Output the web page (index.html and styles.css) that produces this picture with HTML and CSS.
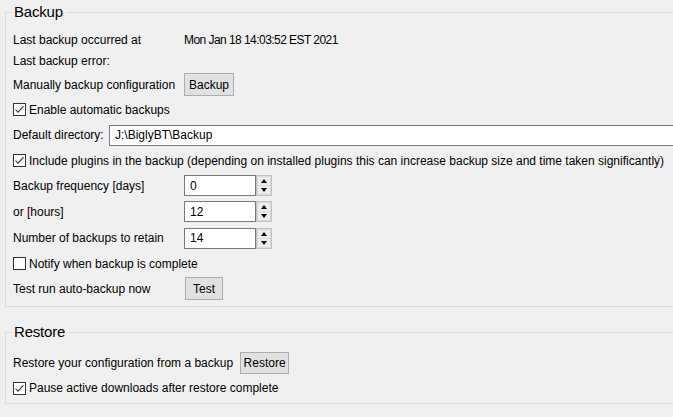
FILE: index.html
```html
<!DOCTYPE html>
<html>
<head>
<meta charset="utf-8">
<link rel="stylesheet" href="styles.css">
</head>
<body>
<div class="page">
  <fieldset class="group group-backup">
    <legend class="group-title">Backup</legend>
    <div class="row h20"><span class="lbl">Last backup occurred at</span><span class="date">Mon Jan 18 14:03:52 EST 2021</span></div>
    <div class="row h22"><span class="lbl">Last backup error:</span></div>
    <div class="row h25"><span class="lbl">Manually backup configuration</span><span class="btn btn-backup">Backup</span></div>
    <div class="row h25"><span class="cb checked"><svg viewBox="0 0 11 11" width="11" height="11"><polyline points="1.5,5.5 4,8.2 9.5,2.2" fill="none" stroke="#333" stroke-width="1.1"/></svg></span><span>Enable automatic backups</span></div>
    <div class="row h26"><span class="lbl-dir">Default directory:</span><span class="field dir-field">J:\BiglyBT\Backup</span></div>
    <div class="row h25"><span class="cb checked"><svg viewBox="0 0 11 11" width="11" height="11"><polyline points="1.5,5.5 4,8.2 9.5,2.2" fill="none" stroke="#333" stroke-width="1.1"/></svg></span><span>Include plugins in the backup (depending on installed plugins this can increase backup size and time taken significantly)</span></div>
    <div class="row h25"><span class="lbl">Backup frequency [days]</span>
      <div class="spin"><span class="field spin-field">0</span><span class="spin-btns"><span class="sb"><i class="up"></i></span><span class="sb"><i class="down"></i></span></span></div></div>
    <div class="row h27"><span class="lbl">or [hours]</span>
      <div class="spin"><span class="field spin-field">12</span><span class="spin-btns"><span class="sb"><i class="up"></i></span><span class="sb"><i class="down"></i></span></span></div></div>
    <div class="row h26"><span class="lbl">Number of backups to retain</span>
      <div class="spin"><span class="field spin-field">14</span><span class="spin-btns"><span class="sb"><i class="up"></i></span><span class="sb"><i class="down"></i></span></span></div></div>
    <div class="row h25"><span class="cb"></span><span>Notify when backup is complete</span></div>
    <div class="row h25"><span class="lbl">Test run auto-backup now</span><span class="btn btn-test">Test</span></div>
  </fieldset>
  <fieldset class="group group-restore">
    <legend class="group-title">Restore</legend>
    <div class="row h26 gap7"><span>Restore your configuration from a backup</span><span class="btn btn-restore">Restore</span></div>
    <div class="row h24"><span class="cb checked"><svg viewBox="0 0 11 11" width="11" height="11"><polyline points="1.5,5.5 4,8.2 9.5,2.2" fill="none" stroke="#333" stroke-width="1.1"/></svg></span><span>Pause active downloads after restore complete</span></div>
  </fieldset>
</div>
</body>
</html>
```
FILE: styles.css
```css
html, body {
  margin: 0;
  padding: 0;
  background: #f0f0f0;
  overflow: hidden;
}
body {
  font-family: "Liberation Sans", Arial, sans-serif;
  font-size: 12px;
  color: #000;
}
.page {
  padding-left: 5px;
  width: 700px;
}
.group {
  border: 1px solid #dcdcdc;
  margin: 0;
  padding: 8px 0 5px 7px;
  min-width: 0;
}
.group-backup {
  margin-top: 2px;
}
.group-restore {
  margin-top: 15px;
  padding-bottom: 3px;
}
.group-title {
  font-size: 15px;
  letter-spacing: -0.2px;
  line-height: 20px;
  padding: 0 5px 0 2px;
  margin-left: -1px;
}
.row {
  display: flex;
  align-items: center;
  white-space: nowrap;
}
.h20 { height: 20px; }
.h22 { height: 22px; }
.h24 { height: 24px; }
.h25 { height: 25px; }
.h26 { height: 26px; }
.h27 { height: 27px; }
.gap7 { gap: 7px; }
.lbl {
  width: 171px;
  flex: none;
}
.lbl-dir {
  width: 96px;
  flex: none;
}
.date {
  letter-spacing: -0.55px;
}
.btn {
  box-sizing: border-box;
  height: 23px;
  border: 1px solid #adadad;
  background: #e1e1e1;
  display: flex;
  align-items: center;
  justify-content: center;
}
.btn-backup { width: 50px; }
.btn-test { width: 38px; margin-left: 1px; }
.btn-restore { width: 49px; height: 22px; }
.cb {
  box-sizing: border-box;
  width: 13px;
  height: 13px;
  border: 1px solid #333;
  background: #fff;
  margin-right: 3px;
  flex: none;
  display: flex;
}
.cb svg { display: block; }
.field {
  box-sizing: border-box;
  height: 21px;
  border: 1px solid #7a7a7a;
  background: #fff;
  padding-left: 5px;
  display: flex;
  align-items: center;
}
.dir-field {
  flex: 1;
}
.spin {
  display: flex;
  height: 21px;
}
.spin-field {
  width: 72px;
}
.spin-btns {
  box-sizing: border-box;
  width: 16px;
  height: 21px;
  border: 1px solid #c3c3c3;
  background: #d9d9d9;
  padding: 1px;
  display: flex;
  flex-direction: column;
  gap: 1px;
}
.sb {
  flex: 1;
  background: #ececec;
  display: flex;
  align-items: center;
  justify-content: center;
}
.up, .down {
  width: 0;
  height: 0;
  border-left: 3.5px solid transparent;
  border-right: 3.5px solid transparent;
}
.up { border-bottom: 4px solid #000; }
.down { border-top: 4px solid #000; }
```
